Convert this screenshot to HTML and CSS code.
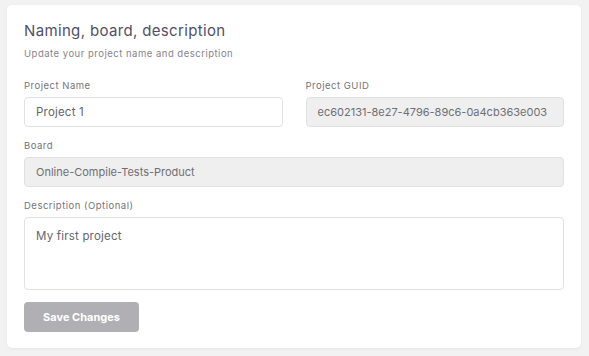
FILE: index.html
```html
<!DOCTYPE html>
<html lang="en">
<head>
    <meta charset="UTF-8">
    <title>Project settings</title>
    <link rel="stylesheet" href="styles.css">
</head>
<body>
    <div class="card">
        <div class="card-title">Naming, board, description</div>
        <div class="card-subtitle">Update your project name and description</div>

        <div class="row">
            <div class="field">
                <label class="field-label">Project Name</label>
                <div class="input">Project 1</div>
            </div>
            <div class="field">
                <label class="field-label">Project GUID</label>
                <div class="input disabled">ec602131-8e27-4796-89c6-0a4cb363e003</div>
            </div>
        </div>

        <div class="field block">
            <label class="field-label">Board</label>
            <div class="input disabled">Online-Compile-Tests-Product</div>
        </div>

        <div class="field block">
            <label class="field-label">Description (Optional)</label>
            <div class="input textarea">My first project</div>
        </div>

        <button class="save-btn">Save Changes</button>
    </div>
</body>
</html>
```

FILE: styles.css
```css
body {
    margin: 0;
    padding: 5px 8px 8px 7px;
    background-color: #f2f2f2;
    font-family: 'Inter', 'Noto Sans', sans-serif;
    color: #4a4a58;
}
.card {
    background: #fff;
    border-radius: 5px;
    box-shadow: 0 1px 3px rgba(0,0,0,0.06);
    padding: 16px 17px 16px 17px;
    height: 343px;
    box-sizing: border-box;
}
.card-title {
    font-size: 15px;
    color: #514f66;
    line-height: 20px;
    letter-spacing: 0.35px;
}
.card-subtitle {
    font-size: 9.5px;
    color: #85838f;
    margin-top: 6px;
    line-height: 14px;
    letter-spacing: 0.5px;
}
.row {
    display: flex;
    gap: 23px;
    margin-top: 18px;
}
.row .field {
    flex: 1;
}
.field.block {
    margin-top: 12px;
}
.field-label {
    display: block;
    font-size: 9.5px;
    color: #75737e;
    line-height: 14px;
    margin-bottom: 4px;
    letter-spacing: 0.5px;
}
.input {
    box-sizing: border-box;
    height: 30px;
    border: 1px solid #e1e1e1;
    border-radius: 4px;
    padding: 0 11px;
    font-size: 11.5px;
    line-height: 28px;
    color: #66646e;
    background: #fff;
    letter-spacing: 0.2px;
}
.input.disabled {
    background: #efefef;
    color: #6e6e76;
    font-size: 11px;
    letter-spacing: 0;
}
.input.textarea {
    height: 73px;
    line-height: 16px;
    padding-top: 10px;
}
.save-btn {
    display: block;
    margin-top: 12px;
    width: 115px;
    height: 30px;
    border: none;
    border-radius: 4px;
    background: #b0b0b4;
    color: #fff;
    font-family: inherit;
    font-size: 11px;
    font-weight: 700;
}
```
